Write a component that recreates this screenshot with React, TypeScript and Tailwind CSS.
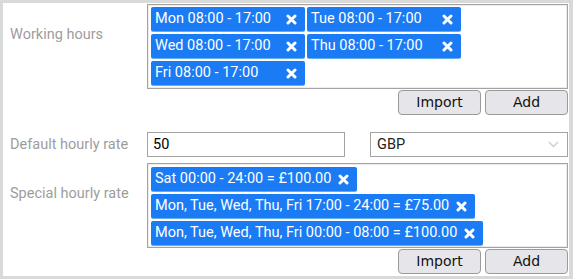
import React from "react";

const workingHours = [
  "Mon 08:00 - 17:00",
  "Tue 08:00 - 17:00",
  "Wed 08:00 - 17:00",
  "Thu 08:00 - 17:00",
  "Fri 08:00 - 17:00",
];

const specialRates = [
  "Sat 00:00 - 24:00 = £100.00",
  "Mon, Tue, Wed, Thu, Fri 17:00 - 24:00 = £75.00",
  "Mon, Tue, Wed, Thu, Fri 00:00 - 08:00 = £100.00",
];

function Cross() {
  return (
    <svg width="11" height="11" viewBox="0 0 11 11" className="shrink-0">
      <path
        d="M2 2 L9 9 M9 2 L2 9"
        stroke="white"
        strokeWidth="3"
        strokeLinecap="round"
      />
    </svg>
  );
}

function Tag({ label, fixed }: { label: string; fixed?: boolean }) {
  return (
    <div
      className={`flex h-6 items-center justify-between rounded-[2px] bg-[#1a7bf4] pl-[4px] pr-[8px] text-[14.5px] text-white shadow-[0_1px_0_#5fb0e8] ${
        fixed ? "w-[154px]" : "gap-[7px]"
      }`}
    >
      <span className="whitespace-nowrap">{label}</span>
      <Cross />
    </div>
  );
}

function Buttons() {
  return (
    <div className="mt-px flex justify-end gap-1 font-['DejaVu_Sans',sans-serif] text-[14px] text-[#111]">
      <button className="h-[25px] w-[83px] rounded-[4px] border border-[#9a9a9a] bg-[#e6e6ea]">
        Import
      </button>
      <button className="h-[25px] w-[83px] rounded-[4px] border border-[#9a9a9a] bg-[#e6e6ea]">
        Add
      </button>
    </div>
  );
}

function Label({ children }: { children: React.ReactNode }) {
  return (
    <div className="w-[144px] shrink-0 pl-[7px] pt-[20px] text-[14.5px] text-[#9d9d9d]">
      {children}
    </div>
  );
}

export default function App() {
  return (
    <div className="h-[279px] w-[573px] bg-[#d9d9d9] pl-[3px] pr-[4px] pt-[3px] pb-[3px] font-['Roboto',sans-serif]">
      <div className="h-full bg-white pr-[1px] pt-px">
        <div className="flex">
          <Label>Working hours</Label>
          <div className="flex-1">
            <div className="flex h-[85px] flex-wrap content-start gap-x-[2px] gap-y-[3px] border border-[#a3a3a3] pl-[3px] pt-[2px] shadow-[inset_0_0_0_1px_#ececec]">
              {workingHours.map((h) => (
                <Tag key={h} label={h} fixed />
              ))}
            </div>
            <Buttons />
          </div>
        </div>

        <div className="mt-[17px] flex items-center">
          <div className="w-[144px] shrink-0 pl-[7px] text-[14.5px] text-[#9d9d9d]">
            Default hourly rate
          </div>
          <input
            readOnly
            value="50"
            className="h-[25px] w-[198px] border border-[#a3a3a3] px-[5px] text-[14.5px] text-black outline-none"
          />
          <div className="ml-[25px] flex h-[25px] flex-1 items-center justify-between border border-[#a3a3a3] pl-[6px] pr-[8px] text-[14.5px] text-[#222]">
            <span>GBP</span>
            <svg width="11" height="7" viewBox="0 0 11 7">
              <path
                d="M1 1 L5.5 5.5 L10 1"
                fill="none"
                stroke="#cfcfcf"
                strokeWidth="1.5"
              />
            </svg>
          </div>
        </div>

        <div className="mt-[6px] flex">
          <Label>Special hourly rate</Label>
          <div className="flex-1">
            <div className="flex h-[85px] flex-col items-start gap-y-[3px] border border-[#a3a3a3] pl-[3px] pt-[3px] shadow-[inset_0_0_0_1px_#ececec]">
              {specialRates.map((r) => (
                <Tag key={r} label={r} />
              ))}
            </div>
            <Buttons />
          </div>
        </div>
      </div>
    </div>
  );
}
